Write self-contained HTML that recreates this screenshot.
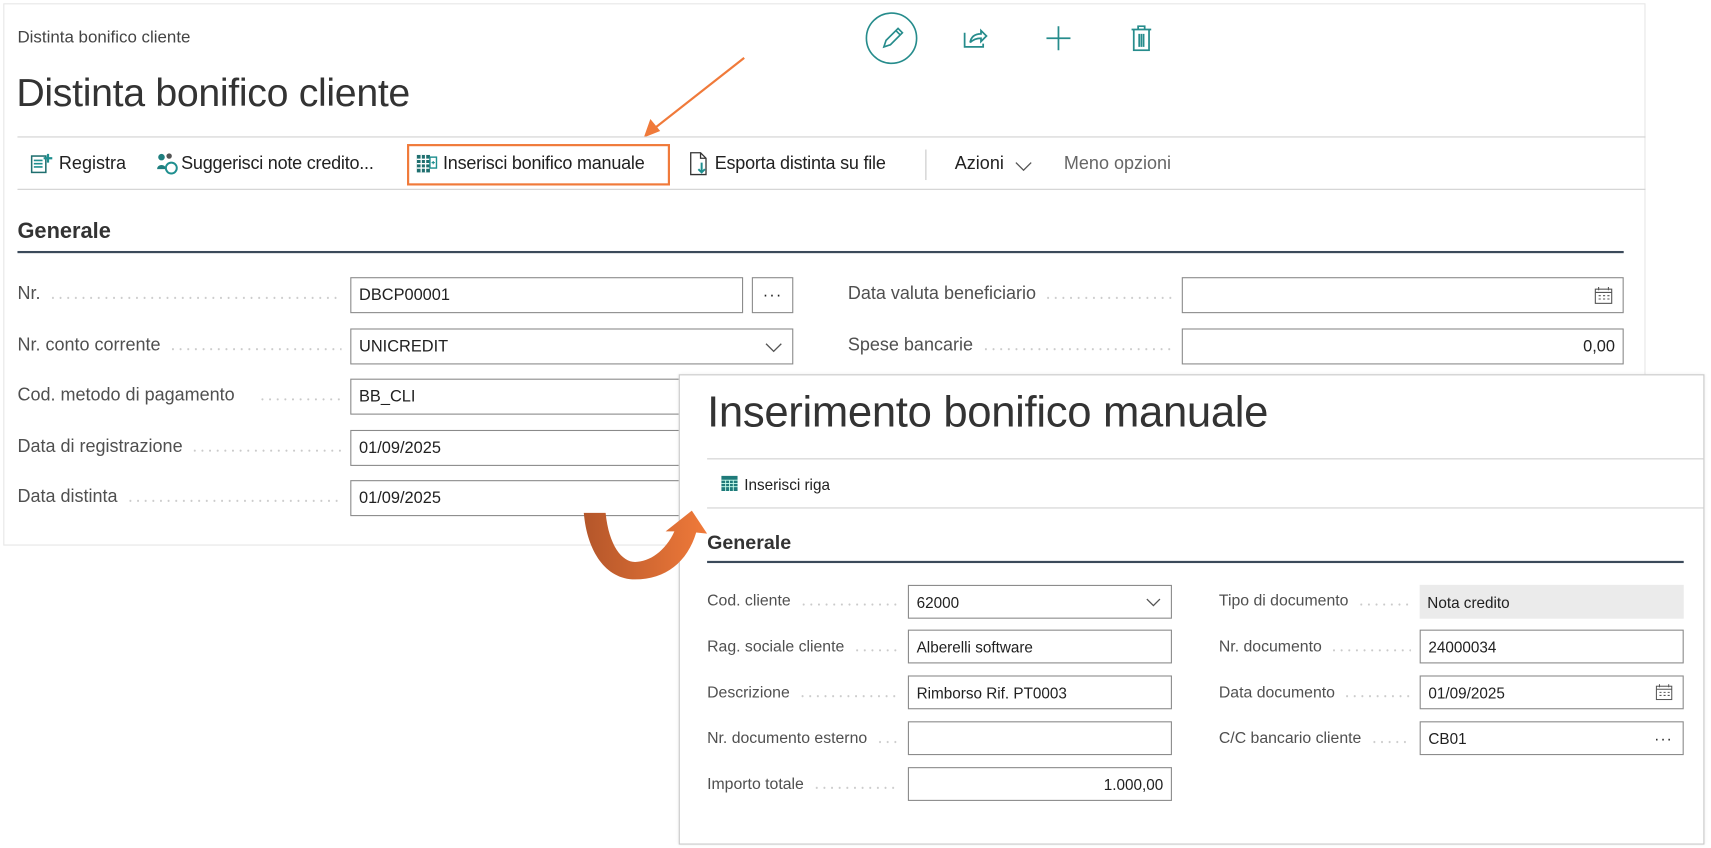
<!DOCTYPE html>
<html><head><meta charset="utf-8">
<style>
html,body{margin:0;padding:0;background:#fff;width:1711px;height:848px;overflow:hidden}
#s{position:absolute;left:0;top:0;width:1568px;height:777px;transform:scale(1.0912);transform-origin:0 0;font-family:"Liberation Sans",sans-serif;color:#212121}
.a{position:absolute}
.t{position:absolute;white-space:nowrap}
.lbl{position:absolute;white-space:nowrap;color:#505050;font-size:16.5px;display:flex;align-items:center}
.lbl i{flex:1;height:2px;margin:0 8px;position:relative;top:3px;background-image:radial-gradient(circle,#cacaca 0.8px,transparent 1.1px);background-size:7px 2px;background-repeat:repeat-x}
.inp{position:absolute;border:1px solid #8a8a8a;box-sizing:border-box;font-size:15px;display:flex;align-items:center;padding:0 7px;background:#fff}
.hr{position:absolute;height:1px;background:#d0d0d0}
.small .lbl{font-size:14.5px}
.small .inp{font-size:14px}
.act{position:absolute;white-space:nowrap;font-size:16.5px;top:141px}
</style></head><body><div id="s">
<div class="a" style="left:3px;top:3px;width:1505px;height:497px;border:1px solid #e6e6e6;box-sizing:border-box"></div>
<div class="t" style="left:16px;top:26px;font-size:15.5px;color:#444">Distinta bonifico cliente</div>
<div class="t" style="left:15px;top:64px;font-size:36px;font-weight:300;color:#333;letter-spacing:-0.3px">Distinta bonifico cliente</div>
<svg class="a" style="left:793px;top:11px" width="50" height="50" viewBox="0 0 50 50" fill="none" stroke="#268c8c" stroke-width="1.5"><circle cx="24" cy="24" r="23"/><path d="M17 32l2-6 11-11 4 4-11 11z M28 17l4 4"/></svg>
<svg class="a" style="left:882px;top:24px" width="24" height="22" viewBox="0 0 24 22" fill="none" stroke="#268c8c" stroke-width="1.6"><path d="M2 6v13h17v-3 M7 15c1-6 5-8 10-8V4l5 5-5 5v-3c-4 0-7 1-10 4"/></svg>
<svg class="a" style="left:958px;top:23px" width="24" height="24" viewBox="0 0 24 24" stroke="#268c8c" stroke-width="1.6"><path d="M12 1v22M1 12h22"/></svg>
<svg class="a" style="left:1036px;top:23px" width="20" height="24" viewBox="0 0 20 24" fill="none" stroke="#268c8c" stroke-width="1.6"><path d="M1 4h18M7 4V1h6v3M3 4v19h14V4M8 8v12M10 8v12M12 8v12"/></svg>
<svg class="a" style="left:580px;top:45px" width="110" height="90" viewBox="0 0 110 90"><path d="M102 8L18 74" stroke="#f07a3a" stroke-width="2"/><path d="M10 81l6-17 9 11z" fill="#f07a3a"/></svg>
<div class="hr" style="left:16px;top:125px;width:1492px"></div>
<svg class="a" style="left:28px;top:140px" width="20" height="20" viewBox="0 0 20 20"><rect x="1" y="3" width="13" height="15" fill="#fff" stroke="#1f6f6f" stroke-width="1.4"/><path d="M3 7h8M3 10h8M3 13h8" stroke="#1f8f8f" stroke-width="1.5"/><path d="M16 1v8M12 5h8" stroke="#1f8f8f" stroke-width="2"/></svg>
<div class="act" style="left:54px">Registra</div>
<svg class="a" style="left:142px;top:139px" width="22" height="22" viewBox="0 0 22 22" fill="#1f7f7f"><circle cx="6" cy="5" r="3"/><circle cx="13" cy="4" r="2.5" fill="#555"/><path d="M2 16c0-5 8-5 8 0z"/><circle cx="15" cy="15" r="5" fill="none" stroke="#1f8f8f" stroke-width="1.8"/></svg>
<div class="act" style="left:166px;letter-spacing:-0.2px">Suggerisci note credito...</div>
<div class="a" style="left:373px;top:132px;width:241px;height:38px;border:2px solid #f07a3a;box-sizing:border-box"></div>
<svg class="a" style="left:381px;top:141px" width="20" height="18" viewBox="0 0 20 18"><rect x="1" y="1" width="12" height="16" fill="#1f6f6f"/><path d="M1 5h12M1 9h12M1 13h12M5 1v16M9 1v16" stroke="#fff" stroke-width="1.2"/><rect x="13" y="3" width="6" height="10" fill="#fff" stroke="#1f8f8f" stroke-width="1.3"/><path d="M14.5 8h3M16 6.5v3" stroke="#1f8f8f"/></svg>
<div class="act" style="left:406px;letter-spacing:-0.2px">Inserisci bonifico manuale</div>
<svg class="a" style="left:632px;top:139px" width="18" height="22" viewBox="0 0 18 22" fill="none" stroke="#333" stroke-width="1.2"><path d="M1 1h9l5 5v15H1z M10 1v5h5"/><path d="M11 10v9M8 16l3 3 3-3" stroke="#1f8f8f" stroke-width="1.8"/></svg>
<div class="act" style="left:655px;letter-spacing:-0.2px">Esporta distinta su file</div>
<div class="a" style="left:848px;top:137px;width:1px;height:28px;background:#c8c8c8"></div>
<div class="act" style="left:875px">Azioni</div>
<svg class="a" style="left:930px;top:147px" width="16" height="10" viewBox="0 0 16 10" fill="none" stroke="#555" stroke-width="1.2"><path d="M1 2l7 7 7-7"/></svg>
<div class="act" style="left:975px;color:#666">Meno opzioni</div>
<div class="hr" style="left:16px;top:173px;width:1492px"></div>
<div class="t" style="left:16px;top:201px;font-size:20px;font-weight:bold;color:#333">Generale</div>
<div class="a" style="left:16px;top:230px;width:1472px;height:2px;background:#3b4a5a"></div>
<div class="lbl" style="left:16px;top:260px;width:305px">Nr.<i></i></div>
<div class="inp" style="left:321px;top:254px;width:360px;height:33px">DBCP00001</div>
<div class="inp" style="left:689px;top:254px;width:38px;height:33px;justify-content:center;letter-spacing:1px">···</div>
<div class="lbl" style="left:16px;top:307px;width:305px">Nr. conto corrente<i></i></div>
<div class="inp" style="left:321px;top:301px;width:406px;height:33px">UNICREDIT<svg style="position:absolute;right:9px;top:12px" width="16" height="10" viewBox="0 0 16 10" fill="none" stroke="#555" stroke-width="1.2"><path d="M1 1l7 7 7-7"/></svg></div>
<div class="lbl" style="left:16px;top:353px;width:305px">Cod. metodo di pagamento<i style="margin-left:22px"></i></div>
<div class="inp" style="left:321px;top:347px;width:406px;height:33px">BB_CLI</div>
<div class="lbl" style="left:16px;top:400px;width:305px">Data di registrazione<i></i></div>
<div class="inp" style="left:321px;top:394px;width:406px;height:33px">01/09/2025</div>
<div class="lbl" style="left:16px;top:446px;width:305px">Data distinta<i></i></div>
<div class="inp" style="left:321px;top:440px;width:406px;height:33px">01/09/2025</div>
<div class="lbl" style="left:777px;top:260px;width:306px">Data valuta beneficiario<i></i></div>
<div class="inp" style="left:1083px;top:254px;width:405px;height:33px"><svg style="position:absolute;right:9px;top:8px" width="17" height="16" viewBox="0 0 17 16" fill="none" stroke="#555"><rect x="1" y="2" width="15" height="13"/><path d="M1 5h15M4 0v3M13 0v3M4 8h2M8 8h2M12 8h2M4 11h2M8 11h2M12 11h2"/></svg></div>
<div class="lbl" style="left:777px;top:307px;width:306px">Spese bancarie<i></i></div>
<div class="inp" style="left:1083px;top:301px;width:405px;height:33px;justify-content:flex-end">0,00</div>
<div class="a small" style="left:622px;top:343px;width:940px;height:431px;border:1px solid #c8c8c8;box-sizing:border-box;background:#fff;box-shadow:0 0 3px rgba(0,0,0,.08)">
<div class="t" style="left:25px;top:12px;font-size:40px;font-weight:300;color:#333;letter-spacing:-0.3px">Inserimento bonifico manuale</div>
<div class="hr" style="left:25px;top:76px;width:914px"></div>
<svg class="a" style="left:38px;top:92px" width="15" height="14" viewBox="0 0 15 14"><rect width="15" height="14" fill="#1f7a7a"/><path d="M0 4h15M0 7h15M0 10h15M4 4v10M7.5 4v10M11 4v10" stroke="#cfe" stroke-width=".8"/></svg>
<div class="t" style="left:59px;top:92px;font-size:14px">Inserisci riga</div>
<div class="hr" style="left:25px;top:121px;width:914px"></div>
<div class="t" style="left:25px;top:143px;font-size:18px;font-weight:bold;color:#333">Generale</div>
<div class="a" style="left:25px;top:170px;width:895px;height:2px;background:#3b4a5a"></div>
<div class="lbl" style="left:25px;top:199px;width:184px">Cod. cliente<i></i></div>
<div class="inp" style="left:209px;top:192px;width:242px;height:31px">62000<svg style="position:absolute;right:9px;top:11px" width="14" height="9" viewBox="0 0 14 9" fill="none" stroke="#555" stroke-width="1.2"><path d="M1 1l6 6 6-6"/></svg></div>
<div class="lbl" style="left:25px;top:241px;width:184px">Rag. sociale cliente<i></i></div>
<div class="inp" style="left:209px;top:233px;width:242px;height:31px">Alberelli software</div>
<div class="lbl" style="left:25px;top:283px;width:184px">Descrizione<i></i></div>
<div class="inp" style="left:209px;top:275px;width:242px;height:31px">Rimborso Rif. PT0003</div>
<div class="lbl" style="left:25px;top:325px;width:184px">Nr. documento esterno<i></i></div>
<div class="inp" style="left:209px;top:317px;width:242px;height:31px"></div>
<div class="lbl" style="left:25px;top:367px;width:184px">Importo totale<i></i></div>
<div class="inp" style="left:209px;top:359px;width:242px;height:31px;justify-content:flex-end">1.000,00</div>
<div class="lbl" style="left:494px;top:199px;width:184px">Tipo di documento<i></i></div>
<div class="inp" style="left:678px;top:192px;width:242px;height:31px;border:none;background:#ebebeb">Nota credito</div>
<div class="lbl" style="left:494px;top:241px;width:184px">Nr. documento<i></i></div>
<div class="inp" style="left:678px;top:233px;width:242px;height:31px">24000034</div>
<div class="lbl" style="left:494px;top:283px;width:184px">Data documento<i></i></div>
<div class="inp" style="left:678px;top:275px;width:242px;height:31px">01/09/2025<svg style="position:absolute;right:9px;top:7px" width="16" height="15" viewBox="0 0 17 16" fill="none" stroke="#555"><rect x="1" y="2" width="15" height="13"/><path d="M1 5h15M4 0v3M13 0v3M4 8h2M8 8h2M12 8h2M4 11h2M8 11h2M12 11h2"/></svg></div>
<div class="lbl" style="left:494px;top:325px;width:184px">C/C bancario cliente<i></i></div>
<div class="inp" style="left:678px;top:317px;width:242px;height:31px">CB01<span style="position:absolute;right:9px;letter-spacing:1px">···</span></div>
</div>
<svg class="a" style="left:530px;top:465px" width="120" height="72" viewBox="0 0 120 72"><defs><linearGradient id="g" x1="0" x2="1"><stop offset="0" stop-color="#b4562a"/><stop offset="1" stop-color="#f07a3a"/></linearGradient></defs><path d="M5 5L25 5C28 35 40 50 52 50C65 50 80 40 88 22L80 22L104 3L118 24L108 23C100 50 80 66 52 66C25 66 8 40 5 5Z" fill="url(#g)"/></svg>
</div></body></html>
